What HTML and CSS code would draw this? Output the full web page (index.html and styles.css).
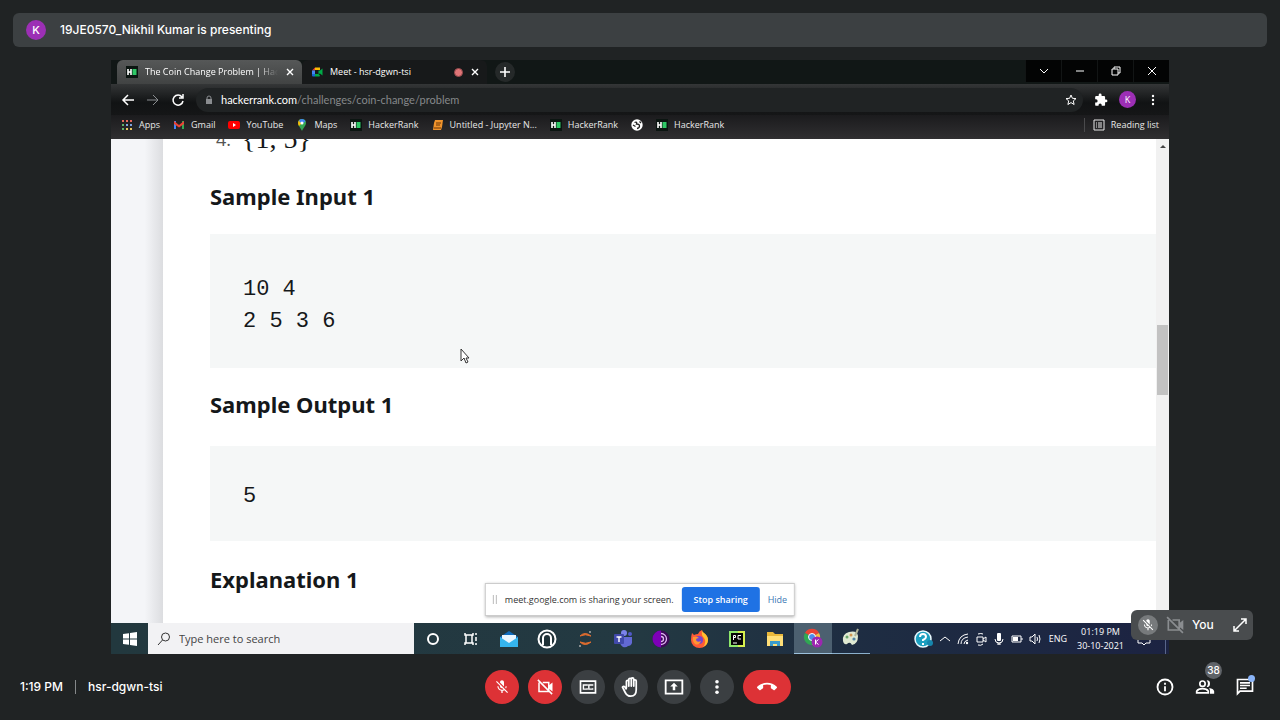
FILE: index.html
```html
<!DOCTYPE html>
<html lang="en">
<head>
<meta charset="utf-8">
<title>Meet - hsr-dgwn-tsi</title>
<link rel="stylesheet" href="styles.css">
</head>
<body>
<svg class="defs" aria-hidden="true">
  <symbol id="hr" viewBox="0 0 12 12"><rect width="12" height="12" fill="#0b1511"/><path d="M2 3v6M5 3v6M2 6h3" stroke="#fff" stroke-width="1.6"/><rect x="6.500" y="3" width="4" height="6" fill="#2ec866"/></symbol>
  <symbol id="close" viewBox="0 0 10 10"><path d="M2 2l6 6M8 2l-6 6" stroke="currentColor" stroke-width="1.4" fill="none"/></symbol>
  <symbol id="micoff" viewBox="0 0 24 24"><path fill="currentColor" d="M19 11h-1.700c0 .74-.16 1.430-.43 2.050l1.230 1.230c.56-.98.9-2.090.9-3.280zm-4.020.17c0-.06.02-.11.02-.17V5c0-1.660-1.340-3-3-3S9 3.340 9 5v.18l5.980 5.990zM4.270 3 3 4.270l6.010 6.010V11c0 1.660 1.330 3 2.990 3 .22 0 .44-.03.65-.08l1.660 1.660c-.71.33-1.500.52-2.310.52-2.760 0-5.300-2.100-5.300-5.100H5c0 3.410 2.720 6.230 6 6.720V21h2v-3.280c.91-.13 1.770-.45 2.540-.9L19.730 21 21 19.730 4.270 3z"/></symbol>
  <symbol id="camoff" viewBox="0 0 24 24"><path d="M9 6h8v12H4V6M2.500 2.500l19 19" stroke="currentColor" stroke-width="2" fill="none"/><path d="M17 10l5-4v12l-5-4z" fill="currentColor"/></symbol>
</svg>

<header class="banner"><span class="avatar">K</span><span>19JE0570_Nikhil Kumar is presenting</span></header>

<main class="stage">
<section class="screen" aria-label="Shared screen">
  <div class="tabstrip">
    <div class="tab active"><svg class="i12"><use href="#hr"/></svg><span class="tab-title fade">The Coin Change Problem | Hack</span><button class="bare" aria-label="Close tab"><svg class="i10"><use href="#close"/></svg></button></div>
    <div class="tab"><svg class="i12" viewBox="0 0 24 24"><path d="M2 9l6-6v6z" fill="#ea4335"/><path d="M8 3h10v5H8z" fill="#fbbc04"/><path d="M2 9h6v7H2z" fill="#4285f4"/><path d="M2 16h6v5H4q-2 0-2-2z" fill="#1967d2"/><path d="M8 16h7l3 3q0 2-2 2H8zM15 9h3l5-4v14l-5-4-3 1z" fill="#00ac47"/></svg><span class="tab-title">Meet - hsr-dgwn-tsi</span><i class="rec"></i><button class="bare" aria-label="Close tab"><svg class="i10"><use href="#close"/></svg></button></div>
    <button class="newtab" aria-label="New tab"><svg class="i12" viewBox="0 0 12 12"><path d="M6 1v10M1 6h10" stroke="currentColor" stroke-width="1.6"/></svg></button>
    <div class="winbtns">
      <button aria-label="Search tabs"><svg class="i12" viewBox="0 0 12 12"><path d="M2 4l4 4 4-4" class="ln"/></svg></button>
      <button aria-label="Minimize"><svg class="i12" viewBox="0 0 12 12"><path d="M2 6h8" class="ln"/></svg></button>
      <button aria-label="Restore"><svg class="i12" viewBox="0 0 12 12"><path d="M2 4h6v6H2zM4 4V2h6v6H8" class="ln"/></svg></button>
      <button aria-label="Close"><svg class="i12" viewBox="0 0 12 12"><path d="M2 2l8 8M10 2l-8 8" class="ln"/></svg></button>
    </div>
  </div>
  <div class="toolbar">
    <button class="bare" aria-label="Back"><svg class="i14" viewBox="0 0 14 14"><path d="M13 7H2M7 2L2 7l5 5" class="ln mid"/></svg></button>
    <button class="bare dim" aria-label="Forward"><svg class="i14" viewBox="0 0 14 14"><path d="M1 7h11M7 2l5 5-5 5" class="ln"/></svg></button>
    <button class="bare" aria-label="Reload"><svg class="i14" viewBox="0 0 14 14"><path d="M11 4A5 5 0 1 0 12 8M12 1v4H8" class="ln mid"/></svg></button>
    <div class="omnibox"><svg class="i10 dim" viewBox="0 0 10 10"><path d="M2 4h6v5H2z" fill="currentColor"/><path d="M3 4V3a2 2 0 0 1 4 0v1" class="ln"/></svg><span class="url"><b>hackerrank.com</b>/challenges/coin-change/problem</span><svg class="i12" viewBox="0 0 12 12"><path d="M6 1l1.400 3.300 3.600.3-2.700 2.300.8 3.600L6 8.600l-3.100 1.900.8-3.600L1 4.600l3.600-.3z" class="ln"/></svg></div>
    <svg class="i14" viewBox="0 0 24 24"><path fill="#fff" d="M20.500 11H19V7a2 2 0 0 0-2-2h-4V3.500a2.500 2.500 0 0 0-5 0V5H4a2 2 0 0 0-2 2v3.800h1.500a2.700 2.700 0 0 1 0 5.400H2V20a2 2 0 0 0 2 2h3.800v-1.500a2.700 2.700 0 0 1 5.400 0V22H17a2 2 0 0 0 2-2v-4h1.500a2.500 2.500 0 0 0 0-5z"/></svg>
    <span class="avatar small">K</span>
    <svg class="i12" viewBox="0 0 12 12" fill="#fff"><circle cx="6" cy="2" r="1.200"/><circle cx="6" cy="6" r="1.200"/><circle cx="6" cy="10" r="1.200"/></svg>
  </div>
  <nav class="bookmarks" aria-label="Bookmarks">
    <a href="#"><svg class="i12" viewBox="0 0 12 12"><g fill="#e8685c"><path d="M1 1h2v2H1zM5 1h2v2H5zM9 1h2v2H9z"/></g><path d="M1 5h2v2H1zM1 9h2v2H1z" fill="#5fb36a"/><path d="M5 5h2v2H5zM9 5h2v2H9z" fill="#7ea3e0"/><path d="M5 9h2v2H5zM9 9h2v2H9z" fill="#e8c65c"/></svg>Apps</a>
    <a href="#"><svg class="i12" viewBox="0 0 12 12"><path d="M1 2h2v8H1z" fill="#4285f4"/><path d="M9 2h2v8H9z" fill="#34a853"/><path d="M1 2l5 4 5-4v3L6 8.500 1 5z" fill="#ea4335"/></svg>Gmail</a>
    <a href="#"><svg class="i12" viewBox="0 0 12 12"><rect y="2" width="12" height="8" rx="2" fill="#f00"/><path d="M5 4v4l3-2z" fill="#fff"/></svg>YouTube</a>
    <a href="#"><svg class="i12" viewBox="0 0 12 12"><path d="M6 12C5 9 2 7 2 4a4 4 0 0 1 8 0c0 3-3 5-4 8z" fill="#34a853"/><path d="M2 4a4 4 0 0 1 2-3.400L6 4 3 7Q2 5.500 2 4z" fill="#fbbc04"/><path d="M4 .6a4 4 0 0 1 5.500 1.600L6 5 3 2z" fill="#4285f4"/><circle cx="6" cy="4" r="1.500" fill="#fff"/></svg>Maps</a>
    <a href="#"><svg class="i12"><use href="#hr"/></svg>HackerRank</a>
    <a href="#"><svg class="i12" viewBox="0 0 12 12"><path d="M3 1h8l-1 7-1 3H1l1-7z" fill="#f0932b"/><path d="M4 4h5M4 6h4M2 9h7" stroke="#6b3708"/></svg>Untitled - Jupyter N...</a>
    <a href="#"><svg class="i12"><use href="#hr"/></svg>HackerRank</a>
    <a href="#" aria-label="Site"><svg class="i12" viewBox="0 0 12 12"><circle cx="6" cy="6" r="5.700" fill="#fff"/><path d="M3.500 3.500q3-1 2 1.500 3 0 3 2T6 9.500M8.500 2.500L10 4M2 6l2.500 1.500" stroke="#222" stroke-width="1.300" fill="none"/></svg></a>
    <a href="#"><svg class="i12"><use href="#hr"/></svg>HackerRank</a>
    <a href="#" class="reading"><svg class="i12" viewBox="0 0 12 12"><path d="M1 1h10v10H1zM3 4h1M5 4h4M3 6h1M5 6h4M3 8h1M5 8h4" class="ln"/></svg>Reading list</a>
  </nav>
  <div class="content">
    <div class="gutter"></div>
    <article class="page">
      <div class="cut"><span class="num">4.</span><span>{1, 5}</span></div>
      <h2>Sample Input 1</h2>
      <pre>10 4
2 5 3 6</pre>
      <h2>Sample Output 1</h2>
      <pre class="one">5</pre>
      <h2>Explanation 1</h2>
    </article>
    <div class="scroll"><i class="up"></i><i class="thumb"></i></div>
    <svg class="cursor" viewBox="0 0 10 16"><path d="M1 1v12l3-3 2 5 2-1-2-4h3z" fill="#fff" stroke="#333"/></svg>
  </div>
  <div class="taskbar">
    <button class="start" aria-label="Start"><svg class="i14" viewBox="0 0 14 14" fill="#fff"><path d="M0 2l6-.8v5.400H0zM7 1l7-1v6.600H7zM0 7.500h6v5.300L0 12zM7 7.500h7V14l-7-1z"/></svg></button>
    <label class="search"><svg class="i14" viewBox="0 0 14 14"><circle cx="8.500" cy="5" r="4" class="ln"/><path d="M5.500 8L1 13" class="ln"/></svg><input type="text" aria-label="Search" placeholder="Type here to search"></label>
    <div class="apps">
      <span><svg class="i14" viewBox="0 0 14 14"><circle cx="7" cy="7" r="5" class="ln w2"/></svg></span>
      <span><svg class="i14" viewBox="0 0 14 14"><path d="M1 1v2h8V1M1 13v-2h8v2M2 3v8M8 3v8M12 1v2M12 5v4M12 11v2" class="ln mid"/></svg></span>
      <span><svg class="i20" viewBox="0 0 20 20"><path d="M1 8l9-6 9 6v10H1z" fill="#0f6cbd"/><path d="M3 6h14v8H3z" fill="#e9f6ff"/><path d="M1 8l9 6 9-6v10H1z" fill="#35b5ee"/></svg></span>
      <span><svg class="i20" viewBox="0 0 20 20"><circle cx="10" cy="10" r="8.500" fill="#203238" stroke="#fff" stroke-width="2"/><path d="M6 16V9a4 4 0 0 1 8 0v7" fill="none" stroke="#fff" stroke-width="2"/></svg></span>
      <span><svg class="i20" viewBox="0 0 20 20"><path d="M5 7q5-5 11 0-5.500-2.500-11 0zM5 13q5 5 11 0-5.500 2.500-11 0z" fill="#e46e2e" stroke="#e46e2e"/><circle cx="15" cy="3" r="1" fill="#aaa"/><circle cx="5" cy="17" r="1" fill="#aaa"/></svg></span>
      <span><svg class="i20" viewBox="0 0 20 20"><circle cx="11" cy="4" r="3" fill="#7b83eb"/><circle cx="17" cy="5" r="2" fill="#5059c9"/><path d="M7 8h12v6q-1 3-4 3-2 2-5 1-3-2-3-5z" fill="#6269d4"/><rect x="1" y="5" width="10" height="10" rx="1" fill="#4049aa"/><path d="M3.500 8h5M6 8v5" stroke="#fff" stroke-width="1.400"/></svg></span>
      <span><svg class="i20" viewBox="0 0 20 20"><circle cx="10" cy="10" r="8.500" fill="#3c0a56"/><path d="M10 1.500a8.500 8.500 0 0 0 0 17z" fill="#7d00b8"/><path d="M10 4.500a5.500 5.500 0 0 1 0 11M10 7.500a2.500 2.500 0 0 1 0 5" fill="none" stroke="#e3b5f5" stroke-width="1.300"/></svg></span>
      <span><svg class="i20" viewBox="0 0 20 20"><path d="M3 4l2 2q2-1 4-1 1-3 4-4 0 2 2 3 4 3 4 7a8.500 8 0 0 1-17 0q0-4 1-7z" fill="#ff5a36"/><path d="M13 1q0 2 2 3 4 3 4 7 0 5-5 7 4-5 1-9-3-3-2-8z" fill="#ffc02e"/><circle cx="10" cy="11" r="4" fill="#7545c9"/><path d="M4 8q4-1 6 1-3 0-3 2 1 3 5 1-2 5-6 3-3-3-2-7z" fill="#ff9632"/></svg></span>
      <span><svg class="i20" viewBox="0 0 20 20"><path d="M2 2h16v16H2z" fill="#d5f04e"/><path d="M2 2h9v16H2z" fill="#8de86b"/><path d="M4 4h12v12H4z" fill="#050505"/><path d="M6 14h4M6.500 11V6.500h2v2h-2M14 6.500h-3v3.500h3" stroke="#fff" fill="none"/></svg></span>
      <span><svg class="i20" viewBox="0 0 20 20"><path d="M2 3h6l2 2h8v12H2z" fill="#e9b83b"/><path d="M2 7h16v10H2z" fill="#ffdf78"/><path d="M5 17v-5h10v5h-3v-2H8v2z" fill="#3b9ccc"/></svg></span>
      <span class="current"><svg class="i20" viewBox="0 0 20 20"><path d="M9 9L2 5a8 8 0 0 1 14 0z" fill="#e94335"/><path d="M9 9v8A8 8 0 0 1 2 5z" fill="#30a853"/><path d="M9 9l7-4a8 8 0 0 1-7 12z" fill="#f6bd42"/><circle cx="9" cy="9" r="3.500" fill="#4b8bed" stroke="#fff"/><circle cx="14" cy="14" r="5.500" fill="#9c27b0"/><path d="M12.500 11.500v5M15.500 11.500l-3 2.500 3 2.500" stroke="#fff" fill="none"/></svg></span>
      <span class="running"><svg class="i20" viewBox="0 0 20 20"><path d="M2 13Q1 6 8 4q8-2 9 4 0 8-6 9-2-4-5-1-3 1-4-3z" fill="#dfe9d2"/><circle cx="6" cy="9" r="1.500" fill="#69a56b"/><circle cx="10" cy="7" r="1.500" fill="#d19854"/><circle cx="13" cy="11" r="1.600" fill="#5285a4"/><path d="M14 8l3-7" stroke="#b1b59a" stroke-width="2"/></svg></span>
    </div>
    <div class="tray">
      <svg class="i20" viewBox="0 0 20 20"><circle cx="10" cy="10" r="8" fill="#1b9fc0" stroke="#eafaff" stroke-width="1.500"/><path d="M7 8q0-3 3-3t3 3q0 1.500-3 3v1M10 14v2" stroke="#fff" stroke-width="2" fill="none"/><circle cx="17" cy="14" r="3" fill="#1686ad"/></svg>
      <svg class="i12" viewBox="0 0 12 12"><path d="M1 8l5-4 5 4" class="ln"/></svg>
      <svg class="i12" viewBox="0 0 12 12"><path d="M1 11Q2 2 11 1M4 11q0-6 7-7M7 11q0-3 4-4" class="ln"/><circle cx="10" cy="10" r="1.200" fill="#fff"/></svg>
      <svg class="i12" viewBox="0 0 12 12"><path d="M2 4h6v5H2zM8 6l3-2v5L8 7M3 1q3-1 5 0M3 12q3 1 5-1" class="ln"/></svg>
      <svg class="i12" viewBox="0 0 12 12"><rect x="4" width="4" height="8" rx="1" fill="#fff"/><path d="M2 6q0 4 4 4t4-4M6 10v2M4 11h4" class="ln"/></svg>
      <svg class="i12" viewBox="0 0 12 12"><path d="M1 3h9v6H1zM11 5v2" class="ln"/><path d="M2 4h5v4H2z" fill="#fff"/></svg>
      <svg class="i12" viewBox="0 0 12 12"><path d="M1 4h2l3-3v10L3 8H1zM8 4q1 2 0 4M10 2q2 4 0 8" class="ln"/></svg>
      <span>ENG</span>
      <span class="clock">01:19 PM<br>30-10-2021</span>
      <svg class="i14" viewBox="0 0 14 14"><path d="M1 1h12v10H9l-2 2-2-2H1z" class="ln"/></svg>
      <i class="peek"></i>
    </div>
  </div>
  <div class="share"><i class="grip"></i><span>meet.google.com is sharing your screen.</span><button class="stop">Stop sharing</button><a href="#">Hide</a></div>
</section>
</main>

<aside class="you"><span class="mic"><svg class="i14"><use href="#micoff"/></svg></span><svg class="i20 dim"><use href="#camoff"/></svg><b>You</b><button class="bare" aria-label="Expand"><svg class="i16" viewBox="0 0 16 16"><path d="M2 14L14 2M9 2h5v5M2 9v5h5" class="ln mid"/></svg></button></aside>

<footer class="controls">
  <div class="info"><span>1:19 PM</span><i></i><span>hsr-dgwn-tsi</span></div>
  <div class="buttons">
    <button class="red" aria-label="Turn on microphone"><svg class="i16"><use href="#micoff"/></svg></button>
    <button class="red" aria-label="Turn on camera"><svg class="i18"><use href="#camoff"/></svg></button>
    <button aria-label="Captions"><svg class="i20" viewBox="0 0 24 24"><path d="M3 5h18v14H3z" stroke="#fff" stroke-width="2" fill="none"/><path d="M11 10.500V9.500H6.500v5H11v-1M17.500 10.500V9.500H13v5h4.500v-1" stroke="#fff" stroke-width="1.700" fill="none"/></svg></button>
    <button aria-label="Raise hand"><svg class="i22" viewBox="0 0 24 24"><path d="M7 12V6a1.300 1.300 0 0 1 2.600 0v5V3.800a1.300 1.300 0 0 1 2.700 0V11 3.500a1.300 1.300 0 0 1 2.700 0V11 5.500a1.300 1.300 0 0 1 2.700 0V15q0 7-6 7-4 0-6-4l-3-6q2-2 4 2z" fill="none" stroke="#fff" stroke-width="1.900" stroke-linejoin="round"/></svg></button>
    <button aria-label="Present"><svg class="i20" viewBox="0 0 24 24"><path d="M2 4h20v16H2z" fill="none" stroke="#fff" stroke-width="2.200"/><path d="M12 7l4.500 4.500h-3V16h-3v-4.500h-3z" fill="#fff"/></svg></button>
    <button aria-label="More options"><svg class="i18" viewBox="0 0 24 24" fill="#fff"><circle cx="12" cy="5" r="2.400"/><circle cx="12" cy="12" r="2.400"/><circle cx="12" cy="19" r="2.400"/></svg></button>
    <button class="red leave" aria-label="Leave call"><svg class="i20" viewBox="0 0 24 24"><path fill="#fff" d="M12 9c-1.600 0-3.150.25-4.600.72v3.100c0 .39-.23.74-.56.9-.98.49-1.870 1.120-2.660 1.850-.18.18-.43.28-.7.28-.28 0-.53-.11-.71-.29L.29 13.080a1 1 0 0 1 0-1.420C3.340 8.780 7.460 7 12 7s8.660 1.780 11.710 4.670a1 1 0 0 1 0 1.420l-2.480 2.480c-.18.18-.43.29-.71.29-.27 0-.52-.11-.7-.28a11.300 11.300 0 0 0-2.670-1.850 1 1 0 0 1-.56-.9v-3.100C15.150 9.250 13.600 9 12 9z"/></svg></button>
  </div>
  <div class="side">
    <button class="bare" aria-label="Meeting details"><svg class="i20" viewBox="0 0 24 24"><circle cx="12" cy="12" r="9" stroke="#fff" stroke-width="2.200" fill="none"/><path d="M12 11v6M12 7v2.200" stroke="#fff" stroke-width="2.200"/></svg></button>
    <button class="bare" aria-label="People"><svg class="i20" viewBox="0 0 24 24"><circle cx="9" cy="8" r="3.200" stroke="#fff" stroke-width="2" fill="none"/><path d="M2 19v-2q2-3 7-3t7 3v2z" stroke="#fff" stroke-width="2" fill="none"/><path d="M14 4a4 4 0 0 1 0 8q3-4 0-8zM17 13.200q5 .8 6 3.800v3h-5v-3q0-2-1-3.800z" fill="#fff"/></svg><span class="count">38</span></button>
    <button class="bare" aria-label="Chat"><svg class="i20" viewBox="0 0 24 24"><path d="M3 3h18v14H6l-3 3zM6 7h12M6 10.200h12M6 13.500h8" stroke="#fff" stroke-width="2" fill="none"/></svg><i class="dot"></i></button>
  </div>
</footer>
</body>
</html>
```
FILE: styles.css
```css
* { box-sizing: border-box; }
body {
  margin: 0; min-height: 100vh; position: relative;
  display: flex; flex-direction: column;
  background: #202324; color: #fff;
  font: 500 12px/16px Inter, "Liberation Sans", sans-serif;
}
button { border: 0; padding: 0; color: inherit; font: inherit; display: flex; align-items: center; justify-content: center; background: none; }
a { color: inherit; text-decoration: none; }
svg { display: block; flex: none; overflow: visible; }
.defs { position: absolute; width: 0; height: 0; }
.i10 { width: 10px; height: 10px; }
.i12 { width: 12px; height: 12px; }
.i14 { width: 14px; height: 14px; }
.i16 { width: 16px; height: 16px; }
.i18 { width: 18px; height: 18px; }
.i20 { width: 20px; height: 20px; }
.i22 { width: 22px; height: 22px; }
.ln { fill: none; stroke: currentColor; stroke-width: 1; }
.w2 { stroke-width: 2; }
.mid { stroke-width: 1.5; }
.dim { color: #8a8d90; }
.avatar { width: 20px; height: 20px; border-radius: 50%; background: #9c2fb5; display: flex; align-items: center; justify-content: center; font-size: 11px; flex: none; }
.avatar.small { width: 17px; height: 17px; font-size: 9px; }

.banner { margin: 13px 13px 0; height: 34px; border-radius: 6px; background: #3c4042; display: flex; align-items: center; gap: 14px; padding: 0 13px; }

.stage { flex: 1; display: flex; padding: 13px 111px 0; }
.screen { flex: 1; min-width: 0; position: relative; display: flex; flex-direction: column; background: #131717; font: 9px/14px "Open Sans", "Noto Sans", sans-serif; }

.tabstrip { height: 24px; display: flex; align-items: stretch; background: #111716; padding-left: 6px; }
.tab { width: 185px; display: flex; align-items: center; gap: 7px; padding: 0 7px 0 9px; background: #17191a; border-radius: 6px 6px 0 0; }
.tab.active { background: linear-gradient(#565858, #414343); }
.tab-title { flex: 1; white-space: nowrap; overflow: hidden; }
.fade { mask-image: linear-gradient(90deg, #000 85%, transparent); }
.rec { width: 9px; height: 9px; border-radius: 50%; background: #e07577; border: 1px solid #95494c; }
.newtab { width: 20px; height: 20px; margin: 2px 0 0 8px; border-radius: 50%; background: #252929; }
.winbtns { margin-left: auto; display: flex; background: #030404; height: 22px; }
.winbtns button { width: 36px; border-left: 1px solid #121515; }

.toolbar { height: 31px; display: flex; align-items: center; gap: 11px; padding: 0 10px; background: linear-gradient(#343637, #111314 60%, #151617); }
.omnibox { flex: 1; display: flex; align-items: center; gap: 7px; height: 24px; padding: 0 6px 0 8px; border-radius: 12px; background: #202324; font: 11px/14px Lato, sans-serif; }
.url { flex: 1; color: #85888a; }
.url b { font-weight: 400; color: #fff; }

.bookmarks { height: 24px; display: flex; align-items: center; gap: 13px; padding: 0 10px 5px; background: linear-gradient(#1b1b1d, #302f31); color: #e8e8e8; white-space: nowrap; overflow: hidden; }
.bookmarks a { display: flex; align-items: center; gap: 6px; }
.bookmarks .reading { margin-left: auto; padding-left: 8px; border-left: 1px solid #4a4a4c; }

.content { flex: 1; display: flex; position: relative; background: #fff; overflow: hidden; }
.gutter { width: 52px; background: linear-gradient(90deg, #f4f5f8 65%, #dcdde0); }
.page { flex: 1; min-width: 0; padding-left: 47px; color: #15181a; }
.cut { height: 40px; margin-top: -14px; padding-left: 6px; display: flex; gap: 11px; font: 28px/28px "Liberation Serif", serif; }
.cut .num { font: 18px/28px "Open Sans", sans-serif; color: #555; }
.page h2 { margin: 16px 0 0; font: 700 22px/30px "Noto Sans", sans-serif; }
.page pre { margin: 23px 0 21px; padding: 40px 33px 30px; background: #f5f7f7; font: 22px/32px "Liberation Mono", monospace; }
.page pre.one { padding: 35px 33px 28px; margin: 27px 0 23px; }
.scroll { width: 13px; background: #f1f1f1; display: flex; flex-direction: column; align-items: center; padding-top: 6px; }
.up { border: 3px solid transparent; border-top: 0; border-bottom: 3px solid #444; }
.thumb { width: 11px; height: 70px; margin-top: 177px; background: #c2c2c2; }
.cursor { position: absolute; left: 349px; top: 209px; width: 10px; height: 16px; }

.taskbar { height: 31px; display: flex; align-items: stretch; background: linear-gradient(90deg, #22383e, #233942 50%, #1e2d42 70%, #1c2342); }
.start { width: 37px; }
.search { width: 266px; background: #f2f2f4; color: #333; display: flex; align-items: center; gap: 8px; padding: 0 9px; }
.search input { flex: 1; min-width: 0; border: 0; padding: 0; background: none; outline: 0; font: 11px/16px "Open Sans", sans-serif; }
.search input::placeholder { color: #444; opacity: 1; }
.apps { display: grid; grid-auto-flow: column; grid-auto-columns: 38px; }
.apps span { display: flex; align-items: center; justify-content: center; }
.apps .current { background: #4c6070; border-bottom: 1px solid #9cc1dc; }
.apps .running { border-bottom: 1px solid #8bb0cc; }
.tray { margin-left: auto; display: flex; align-items: center; gap: 6px; padding-right: 3px; }
.tray span { margin: 0 2px; }
.tray .clock { text-align: center; margin-right: 7px; }
.peek { width: 1px; height: 31px; margin-left: 8px; background: #59668a; }

.share { position: absolute; left: 50%; bottom: 38px; transform: translateX(-50%); height: 33px; display: flex; align-items: center; gap: 8px; padding: 0 7px; background: #fff; color: #333; border: 1px solid #ccc; box-shadow: 0 1px 3px #0005; white-space: nowrap; }
.share a { color: #3c78b4; }
.grip { width: 4px; height: 9px; border: 1px solid #bbb; border-width: 0 1px; }
.stop { height: 25px; width: 78px; border-radius: 3px; background: #1f72e4; color: #fff; font-weight: 600; }

.you { position: absolute; right: 27px; bottom: 80px; width: 122px; height: 30px; border-radius: 6px; background: #494c4e; display: flex; align-items: center; gap: 7px; padding: 0 5px 0 7px; }
.you b { font-weight: 500; margin-right: auto; }
.mic { width: 20px; height: 20px; border-radius: 50%; background: #777a7c; display: flex; align-items: center; justify-content: center; }

.controls { height: 66px; display: grid; grid-template-columns: 1fr auto 1fr; align-items: center; padding: 0 25px 0 20px; }
.info { display: flex; align-items: center; gap: 12px; }
.info i { width: 1px; height: 14px; background: #85888a; }
.buttons { display: flex; gap: 9px; }
.buttons button { width: 34px; height: 34px; border-radius: 17px; background: #3b3f42; }
.buttons .red { background: #dd3236; }
.buttons .leave { width: 48px; }
.side { display: flex; gap: 20px; justify-content: flex-end; }
.side button { position: relative; }
.count { position: absolute; left: 10px; top: -15px; width: 17px; height: 17px; border-radius: 50%; background: #5f6368; font-size: 10px; line-height: 17px; text-align: center; }
.dot { position: absolute; right: 0; top: -2px; width: 7px; height: 7px; border-radius: 50%; background: #8ab4f8; }
```
